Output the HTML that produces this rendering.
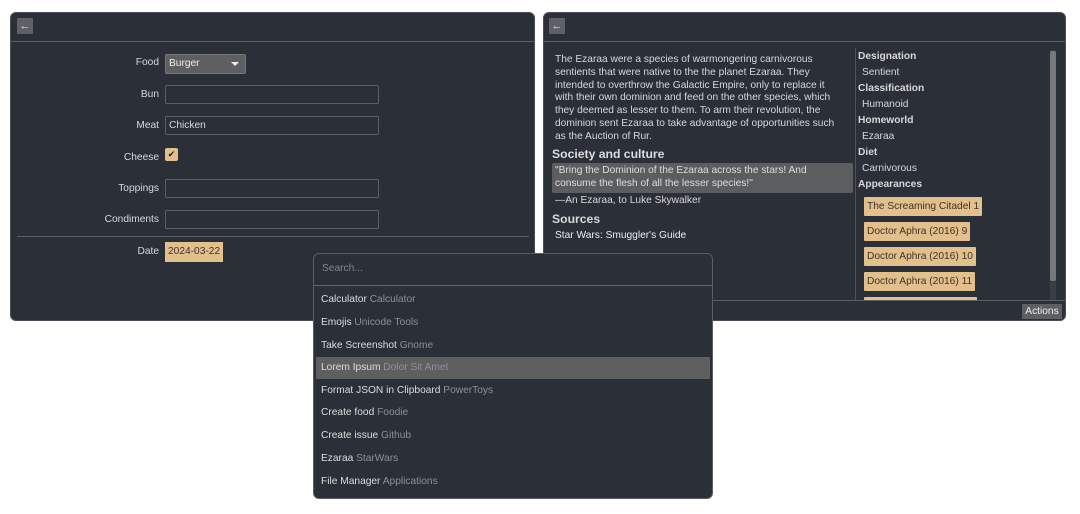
<!DOCTYPE html>
<html><head><style>
*{margin:0;padding:0;box-sizing:border-box}
body{width:1080px;height:514px;background:#fff;position:relative;overflow:hidden;font-family:"Liberation Sans","DejaVu Sans",sans-serif;font-size:10.2px;color:#d8d8d8;white-space:nowrap}
.a{position:absolute}
.win{position:absolute;background:#2b2f38;border:1px solid #4a4d55;border-radius:6px;overflow:hidden}
.hl{position:absolute;height:1px;background:#5b5f66}
.back{position:absolute;width:16px;height:16px;background:#5f6166;border-radius:1px;color:#eee;font-size:11px;line-height:16px;text-align:center}
.inp{position:absolute;width:214px;height:19px;border:1px solid #5a5e66;border-radius:2px;padding:0 3px;line-height:17px}
.chip{position:absolute;left:320px;height:19px;background:#e3bf8c;color:#3a342c;padding:0 3px;line-height:19px;border-radius:1px}
.it{position:absolute;left:7px;height:21px;line-height:21px;color:#ddd}
.it span{color:#8d9096}
.r{position:absolute;left:0;width:148px;text-align:right}
b{font-weight:bold}
</style></head><body>

<div class="win" style="left:10px;top:12px;width:525px;height:309px">
 <div class="back" style="left:6px;top:5px">&#8592;</div>
 <div class="hl" style="left:0;right:0;top:28px"></div>
 <div class="r" style="top:44px">Food</div>
 <div class="a" style="left:154px;top:41px;width:81px;height:20px;background:#5d5f63;border:1px solid #777;border-radius:2px;padding:0 3px;line-height:18px;color:#eee">Burger<span style="position:absolute;right:6px;top:7px;border:4px solid transparent;border-top:4px solid #eee"></span></div>
 <div class="r" style="top:76px">Bun</div>
 <div class="inp" style="left:154px;top:72px"></div>
 <div class="r" style="top:107px">Meat</div>
 <div class="inp" style="left:154px;top:103px">Chicken</div>
 <div class="r" style="top:139px">Cheese</div>
 <div class="a" style="left:154px;top:135px;width:13px;height:13px;background:#e3bf8c;border-radius:2px;color:#222;font-size:9px;line-height:13px;text-align:center">&#10004;</div>
 <div class="r" style="top:170px">Toppings</div>
 <div class="inp" style="left:154px;top:166px"></div>
 <div class="r" style="top:201px">Condiments</div>
 <div class="inp" style="left:154px;top:197px"></div>
 <div class="hl" style="left:6px;width:512px;top:223px"></div>
 <div class="r" style="top:233px">Date</div>
 <div class="a" style="left:154px;top:229px;width:58px;height:20px;background:#e3bf8c;color:#3a342c;padding:0 3px;line-height:20px">2024-03-22</div>
</div>

<div class="win" style="left:543px;top:12px;width:523px;height:309px">
 <div class="back" style="left:5px;top:5px">&#8592;</div>
 <div class="hl" style="left:0;right:0;top:28px"></div>
 <div class="a" style="left:11px;top:41px;line-height:12.8px">The Ezaraa were a species of warmongering carnivorous<br>sentients that were native to the the planet Ezaraa. They<br>intended to overthrow the Galactic Empire, only to replace it<br>with their own dominion and feed on the other species, which<br>they deemed as lesser to them. To arm their revolution, the<br>dominion sent Ezaraa to take advantage of opportunities such<br>as the Auction of Rur.</div>
 <div class="a" style="left:8px;top:134px;font-size:12.2px;font-weight:bold;color:#ddd">Society and culture</div>
 <div class="a" style="left:8px;top:150px;width:301px;height:30px;background:#5c5d5f;border-radius:2px;padding:2px 3px;line-height:12.8px;color:#ddd">"Bring the Dominion of the Ezaraa across the stars! And<br>consume the flesh of all the lesser species!"</div>
 <div class="a" style="left:11px;top:182px">—An Ezaraa, to Luke Skywalker</div>
 <div class="a" style="left:8px;top:199px;font-size:12.2px;font-weight:bold">Sources</div>
 <div class="a" style="left:11px;top:217px;color:#eee">Star Wars: Smuggler's Guide</div>
 <div class="a" style="left:311px;top:35px;width:1px;height:252px;background:#4f535a"></div>
 <div class="a" style="left:314px;top:38px;font-weight:bold">Designation</div>
 <div class="a" style="left:318px;top:54px">Sentient</div>
 <div class="a" style="left:314px;top:70px;font-weight:bold">Classification</div>
 <div class="a" style="left:318px;top:86px">Humanoid</div>
 <div class="a" style="left:314px;top:102px;font-weight:bold">Homeworld</div>
 <div class="a" style="left:318px;top:118px">Ezaraa</div>
 <div class="a" style="left:314px;top:134px;font-weight:bold">Diet</div>
 <div class="a" style="left:318px;top:150px">Carnivorous</div>
 <div class="a" style="left:314px;top:166px;font-weight:bold">Appearances</div>
 <div style="position:absolute;left:0;top:0;width:523px;height:287px;overflow:hidden">
 <div class="chip" style="top:184px">The Screaming Citadel 1</div>
 <div class="chip" style="top:209px">Doctor Aphra (2016) 9</div>
 <div class="chip" style="top:234px">Doctor Aphra (2016) 10</div>
 <div class="chip" style="top:259px">Doctor Aphra (2016) 11</div>
 <div class="chip" style="top:284px;width:113px"></div>
 </div>
 <div class="a" style="left:506px;top:37px;width:6px;height:250px;background:#3a3d44"></div>
 <div class="a" style="left:506px;top:38px;width:6px;height:230px;background:#77787a;border-radius:2px"></div>
 <div class="hl" style="left:0;right:0;top:287px"></div>
 <div class="a" style="left:478px;top:291px;width:40px;height:15px;background:#5d5f63;color:#eee;text-align:center;line-height:15px">Actions</div>
</div>

<div class="win" style="left:313px;top:253px;width:400px;height:246px;border-color:#5a5d63">
 <div class="a" style="left:8px;top:9px;color:#83868c">Search...</div>
 <div class="hl" style="left:0;right:0;top:31px;background:#62666c"></div>
 <div class="it" style="top:35px">Calculator <span>Calculator</span></div>
 <div class="it" style="top:58px">Emojis <span>Unicode Tools</span></div>
 <div class="it" style="top:81px">Take Screenshot <span>Gnome</span></div>
 <div class="a" style="left:2px;top:103px;width:394px;height:22px;background:#5f5f60"></div>
 <div class="it" style="top:103px">Lorem Ipsum <span>Dolor Sit Amet</span></div>
 <div class="it" style="top:126px">Format JSON in Clipboard <span>PowerToys</span></div>
 <div class="it" style="top:148px">Create food <span>Foodie</span></div>
 <div class="it" style="top:171px">Create issue <span>Github</span></div>
 <div class="it" style="top:194px">Ezaraa <span>StarWars</span></div>
 <div class="it" style="top:217px">File Manager <span>Applications</span></div>
</div>
</body></html>
